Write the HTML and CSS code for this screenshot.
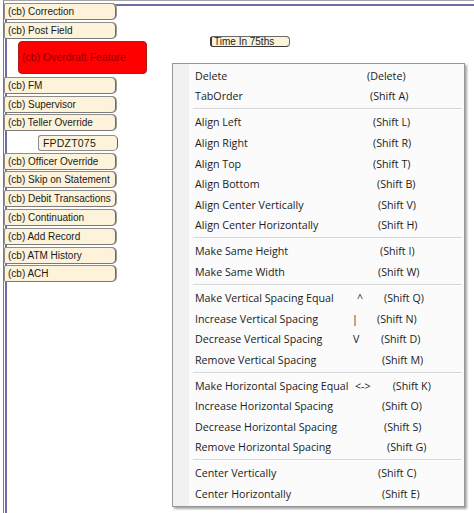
FILE: index.html
```html
<!DOCTYPE html>
<html>
<head>
<meta charset="utf-8">
<link rel="stylesheet" href="styles.css">
</head>
<body>
<div class="designer">
  <div class="controls">
    <div class="cb">(cb) Correction</div>
    <div class="cb">(cb) Post Field</div>
    <div class="cb-red">(cb) Overdraft Feature</div>
    <div class="cb after-red">(cb) FM</div>
    <div class="cb">(cb) Supervisor</div>
    <div class="cb">(cb) Teller Override</div>
    <div class="field">FPDZT075</div>
    <div class="cb after-field">(cb) Officer Override</div>
    <div class="cb">(cb) Skip on Statement</div>
    <div class="cb">(cb) Debit Transactions</div>
    <div class="cb">(cb) Continuation</div>
    <div class="cb">(cb) Add Record</div>
    <div class="cb">(cb) ATM History</div>
    <div class="cb">(cb) ACH</div>
  </div>

  <div class="time-label">Time In 75ths</div>

  <div class="menu">
    <div class="mi"><span class="ml">Delete</span><span class="mk o0">(Delete)</span></div>
    <div class="mi"><span class="ml">TabOrder</span><span class="mk o3">(Shift A)</span></div>
    <div class="sep"></div>
    <div class="mi"><span class="ml">Align Left</span><span class="mk o6">(Shift L)</span></div>
    <div class="mi"><span class="ml">Align Right</span><span class="mk o6">(Shift R)</span></div>
    <div class="mi"><span class="ml">Align Top</span><span class="mk o6">(Shift T)</span></div>
    <div class="mi"><span class="ml">Align Bottom</span><span class="mk o10">(Shift B)</span></div>
    <div class="mi"><span class="ml">Align Center Vertically</span><span class="mk o11">(Shift V)</span></div>
    <div class="mi"><span class="ml">Align Center Horizontally</span><span class="mk o11">(Shift H)</span></div>
    <div class="sep"></div>
    <div class="mi"><span class="ml">Make Same Height</span><span class="mk o13">(Shift I)</span></div>
    <div class="mi"><span class="ml">Make Same Width</span><span class="mk o11">(Shift W)</span></div>
    <div class="sep"></div>
    <div class="mi"><span class="ml">Make Vertical Spacing Equal</span><span class="sym s5">^</span><span class="mk o17">(Shift Q)</span></div>
    <div class="mi"><span class="ml">Increase Vertical Spacing</span><span class="sym s0">|</span><span class="mk o10">(Shift N)</span></div>
    <div class="mi"><span class="ml">Decrease Vertical Spacing</span><span class="sym s1">V</span><span class="mk o14">(Shift D)</span></div>
    <div class="mi"><span class="ml">Remove Vertical Spacing</span><span class="mk o15">(Shift M)</span></div>
    <div class="sep"></div>
    <div class="mi"><span class="ml">Make Horizontal Spacing Equal</span><span class="sym s4">&lt;-&gt;</span><span class="mk o22">(Shift K)</span></div>
    <div class="mi"><span class="ml">Increase Horizontal Spacing</span><span class="mk o15">(Shift O)</span></div>
    <div class="mi"><span class="ml">Decrease Horizontal Spacing</span><span class="mk o17">(Shift S)</span></div>
    <div class="mi"><span class="ml">Remove Horizontal Spacing</span><span class="mk o20">(Shift G)</span></div>
    <div class="sep"></div>
    <div class="mi"><span class="ml">Center Vertically</span><span class="mk o11">(Shift C)</span></div>
    <div class="mi"><span class="ml">Center Horizontally</span><span class="mk o15">(Shift E)</span></div>
  </div>
</div>
</body>
</html>
```

FILE: styles.css
```css
html, body {
  margin: 0;
  padding: 0;
  background: #ffffff;
}

.designer {
  position: relative;
  width: 474px;
  height: 513px;
  overflow: hidden;
  background: #ffffff;
  font-family: "Liberation Sans", Arial, sans-serif;
}

/* frame lines of the design surface */
.designer::before {
  content: "";
  position: absolute;
  left: 3px;
  top: 0;
  right: 0;
  bottom: 0;
  border-top: 1px solid #a4a4a4;
  border-left: 1px solid #7c7c7c;
}
.designer::after {
  content: "";
  position: absolute;
  left: 5px;
  top: 4px;
  right: 0;
  bottom: 0;
  border-top: 2px solid #6d6ca6;
  border-left: 2px solid #6d6ca6;
}

.controls {
  position: relative;
  z-index: 1;
  display: flex;
  flex-direction: column;
  align-items: flex-start;
  gap: 1.8px;
  padding: 3px 0 0 4px;
}

.cb {
  box-sizing: border-box;
  width: 112px;
  height: 17px;
  padding-left: 3px;
  background: #fcf3da;
  border: 1px solid #8d8d8d;
  border-right-color: #6a6a6a;
  border-bottom-color: #7a7a7a;
  border-radius: 2px 5px 5px 2px;
  box-shadow: 1px 0 0 #9a9a9a;
  font-size: 10px;
  line-height: 15px;
  color: #1a1a1a;
  white-space: nowrap;
}

.cb-red {
  box-sizing: border-box;
  width: 129px;
  height: 33px;
  margin: 0.7px 0 0 14px;
  padding-left: 3px;
  background: #ff0000;
  border: 1px solid #b01818;
  border-radius: 4px;
  font-size: 10.5px;
  line-height: 31px;
  color: #8a0000;
  white-space: nowrap;
}

.after-red {
  margin-top: 0.7px;
}

.field {
  box-sizing: border-box;
  width: 80px;
  height: 16px;
  margin: 1.4px 0 0 34px;
  padding-left: 4px;
  background: #fcf3da;
  border: 1px solid #8d8d8d;
  border-right-color: #5e5e5e;
  border-radius: 3px 5px 5px 3px;
  font-size: 10.5px;
  line-height: 14px;
  color: #1a1a1a;
  letter-spacing: 0.2px;
}

.after-field {
  margin-top: 0.2px;
}

.time-label {
  position: absolute;
  z-index: 1;
  left: 210px;
  top: 36px;
  box-sizing: border-box;
  width: 80px;
  height: 11px;
  padding-left: 2px;
  background: #fcf3da;
  border: 1px solid #6a6a6a;
  border-left: 2px solid #3a3a3a;
  border-bottom-color: #3a3a3a;
  border-radius: 3px 4px 4px 3px;
  font-size: 10px;
  line-height: 10px;
  color: #222222;
  overflow: hidden;
  white-space: nowrap;
}

/* context menu */
.menu {
  position: absolute;
  z-index: 2;
  left: 172px;
  top: 63px;
  box-sizing: border-box;
  width: 293px;
  height: 444px;
  padding: 1.5px 2px 2px 0;
  background: linear-gradient(to right, #f1f1f1 0, #f1f1f1 16px, #fbfbfb 16px, #fbfbfb 100%);
  border: 1px solid #979797;
  box-shadow: 2px 2px 2px rgba(0, 0, 0, 0.35);
  font-family: "Open Sans", "Noto Sans", sans-serif;
  font-size: 10.7px;
  color: #1c1c1c;
}

.mi {
  display: flex;
  align-items: center;
  height: 20.6px;
  padding-left: 22px;
  white-space: nowrap;
}

.ml {
  flex: 0 0 157px;
}

.sym {
  flex: 0 0 15px;
  box-sizing: border-box;
  overflow: visible;
}

.mk {
  margin-left: 15px;
}
.sym + .mk {
  margin-left: 0;
}

.s0 { padding-left: 0; }
.s1 { padding-left: 1px; }
.s4 { padding-left: 3px; }
.s5 { padding-left: 5px; }

.o0 { padding-left: 0; }
.o3 { padding-left: 3px; }
.o6 { padding-left: 6px; }
.o10 { padding-left: 10px; }
.o11 { padding-left: 11px; }
.o13 { padding-left: 13px; }
.o14 { padding-left: 14px; }
.o15 { padding-left: 15px; }
.o17 { padding-left: 17px; }
.o20 { padding-left: 20px; }
.o22 { padding-left: 22px; }

.sep {
  height: 5.4px;
  margin-left: 20px;
  display: flex;
  flex-direction: column;
  justify-content: center;
}
.sep::before {
  content: "";
  display: block;
  height: 1px;
  background: #d6d6d6;
  border-bottom: 1px solid #ffffff;
}
```
